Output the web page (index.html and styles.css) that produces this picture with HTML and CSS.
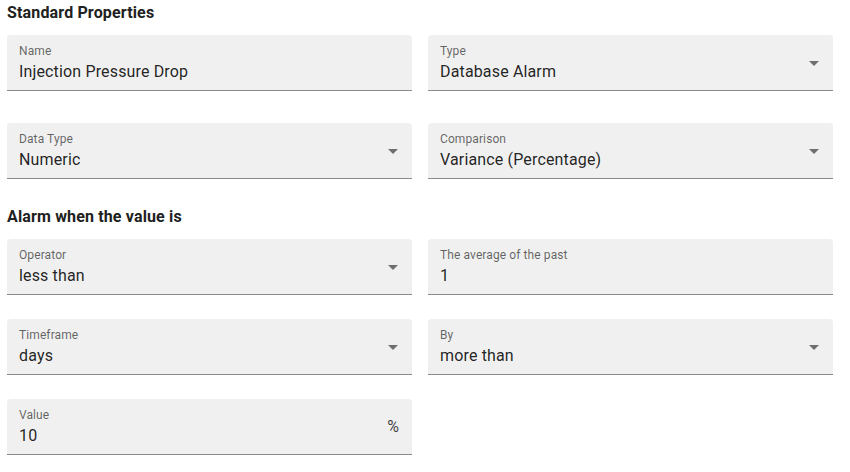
FILE: index.html
```html
<!DOCTYPE html>
<html lang="en">
<head>
<meta charset="utf-8">
<title>Alarm Properties</title>
<link rel="stylesheet" href="styles.css">
</head>
<body>
<div class="form">
  <h2 class="section-title first">Standard Properties</h2>
  <div class="grid grid-standard">
    <div class="field">
      <div class="field-main">
        <span class="label">Name</span>
        <span class="value">Injection Pressure Drop</span>
      </div>
    </div>
    <div class="field">
      <div class="field-main">
        <span class="label">Type</span>
        <span class="value">Database Alarm</span>
      </div>
      <span class="arrow"></span>
    </div>
    <div class="field">
      <div class="field-main">
        <span class="label">Data Type</span>
        <span class="value">Numeric</span>
      </div>
      <span class="arrow"></span>
    </div>
    <div class="field">
      <div class="field-main">
        <span class="label">Comparison</span>
        <span class="value">Variance (Percentage)</span>
      </div>
      <span class="arrow"></span>
    </div>
  </div>

  <h2 class="section-title second">Alarm when the value is</h2>
  <div class="grid grid-alarm">
    <div class="field">
      <div class="field-main">
        <span class="label">Operator</span>
        <span class="value">less than</span>
      </div>
      <span class="arrow"></span>
    </div>
    <div class="field">
      <div class="field-main">
        <span class="label">The average of the past</span>
        <span class="value">1</span>
      </div>
    </div>
    <div class="field">
      <div class="field-main">
        <span class="label">Timeframe</span>
        <span class="value">days</span>
      </div>
      <span class="arrow"></span>
    </div>
    <div class="field">
      <div class="field-main">
        <span class="label">By</span>
        <span class="value">more than</span>
      </div>
      <span class="arrow"></span>
    </div>
    <div class="field">
      <div class="field-main">
        <span class="label">Value</span>
        <span class="value">10</span>
      </div>
      <span class="suffix">%</span>
    </div>
  </div>
</div>
</body>
</html>
```

FILE: styles.css
```css
* {
  box-sizing: border-box;
}

html, body {
  margin: 0;
  padding: 0;
  background: #ffffff;
}

body {
  font-family: Roboto, "Liberation Sans", Arial, sans-serif;
  color: rgba(0, 0, 0, 0.87);
}

.form {
  width: 850px;
  padding: 0 17px 0 7px;
}

.section-title {
  margin: 0;
  font-size: 16px;
  line-height: 24px;
  font-weight: 700;
  letter-spacing: 0.15px;
  color: #212121;
}

.section-title.first {
  margin-top: 1px;
  margin-bottom: 10px;
}

.section-title.second {
  margin-top: 26px;
  margin-bottom: 10px;
}

.grid {
  display: grid;
  grid-template-columns: 405px 405px;
  column-gap: 16px;
}

.grid-standard {
  row-gap: 32px;
}

.grid-alarm {
  row-gap: 24px;
}

.field {
  height: 56px;
  display: flex;
  align-items: stretch;
  background: #f0f0f0;
  border-radius: 4px 4px 0 0;
  border-bottom: 1px solid #8b8b8b;
  padding: 0 14px 0 12px;
}

.field-main {
  flex: 1;
  display: flex;
  flex-direction: column;
  padding-top: 8px;
  min-width: 0;
}

.label {
  font-size: 12px;
  line-height: 16px;
  letter-spacing: 0.1px;
  color: rgba(0, 0, 0, 0.6);
  white-space: nowrap;
}

.value {
  margin-top: 1px;
  font-size: 16px;
  line-height: 24px;
  letter-spacing: 0.15px;
  color: rgba(0, 0, 0, 0.87);
  white-space: nowrap;
}

.arrow {
  align-self: flex-start;
  margin-top: 26px;
  width: 0;
  height: 0;
  border-left: 5px solid transparent;
  border-right: 5px solid transparent;
  border-top: 5px solid #6e6e6e;
}

.suffix {
  align-self: flex-start;
  margin-top: 16px;
  margin-right: -1px;
  font-size: 16px;
  line-height: 24px;
  color: rgba(0, 0, 0, 0.75);
}
```
